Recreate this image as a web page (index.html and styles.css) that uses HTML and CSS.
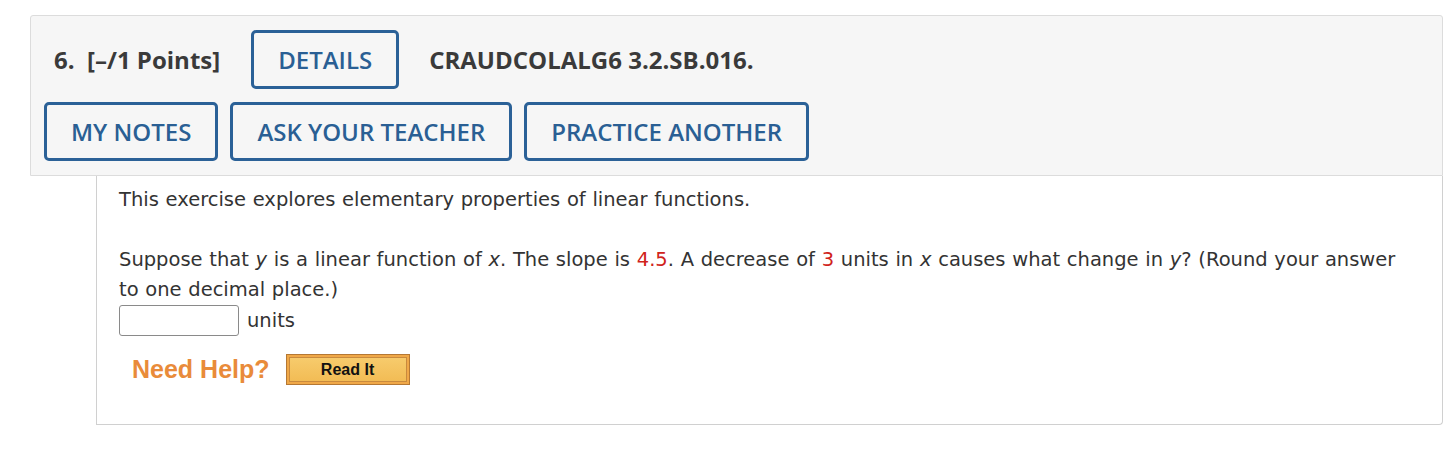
FILE: index.html
```html
<!DOCTYPE html>
<html>
<head>
<meta charset="utf-8">
<link rel="stylesheet" href="styles.css">
</head>
<body>
<div class="page">
  <div class="header">
    <div class="row row-top">
      <span class="qnum">6.&nbsp;&nbsp;[–/1 Points]</span>
      <span class="btn">DETAILS</span>
      <span class="qid">CRAUDCOLALG6 3.2.SB.016.</span>
    </div>
    <div class="row row-bottom">
      <span class="btn">MY NOTES</span>
      <span class="btn">ASK YOUR TEACHER</span>
      <span class="btn">PRACTICE ANOTHER</span>
    </div>
  </div>
  <div class="content">
    <p class="line">This exercise explores elementary properties of linear functions.</p>
    <p class="line blank">&nbsp;</p>
    <p class="line">Suppose that <i>y</i> is a linear function of <i>x</i>. The slope is <span class="red">4.5</span>. A decrease of <span class="red">3</span> units in <i>x</i> causes what change in <i>y</i>? (Round your answer to one decimal place.)</p>
    <div class="answer">
      <input class="field" type="text">
      <span class="unit">units</span>
    </div>
    <div class="help">
      <span class="need">Need Help?</span>
      <span class="readit"><span class="readit-inner">Read It</span></span>
    </div>
  </div>
</div>
</body>
</html>
```

FILE: styles.css
```css
html, body {
  margin: 0;
  padding: 0;
  background: #ffffff;
}

.page {
  padding: 15px 1px 0 30px;
}

.header {
  background: #f6f6f6;
  border: 1px solid #dcdcdc;
  border-radius: 3px 3px 0 0;
  padding: 14px 13px 14px 13px;
  font-family: "Open Sans", sans-serif;
  font-weight: 600;
  font-size: 24px;
  color: #333333;
}

.row {
  display: flex;
  align-items: center;
}

.row-top {
  padding-left: 10px;
  gap: 31px;
}

.row-bottom {
  margin-top: 13px;
  gap: 12px;
}

.qnum, .qid {
  font-weight: 700;
  color: #3a3a3a;
  white-space: pre;
}

.qid {
  margin-left: -1px;
}

.btn {
  box-sizing: border-box;
  height: 59px;
  display: inline-flex;
  align-items: center;
  padding: 0 24px;
  border: 3px solid #2b6197;
  border-radius: 5px;
  color: #2a5f94;
  font-weight: 600;
  background: #f6f6f6;
}

.content {
  margin-left: 66px;
  border: 1px solid #d0d0d0;
  border-top: none;
  border-radius: 0 0 4px 0;
  padding: 9px 40px 39px 22px;
  font-family: "DejaVu Sans", Verdana, sans-serif;
  font-size: 19.5px;
  color: #333333;
  background: #ffffff;
}

.line {
  margin: 0;
  line-height: 30px;
  word-spacing: 0.5px;
}

.line.blank {
  word-spacing: 0;
}

.red {
  color: #d0231b;
}

.answer {
  display: flex;
  align-items: center;
  height: 31px;
}

.field {
  box-sizing: border-box;
  width: 120px;
  height: 31px;
  margin: 0;
  border: 1px solid #8a8a8a;
  border-radius: 3px;
  background: #ffffff;
}

.unit {
  margin-left: 8px;
}

.help {
  display: flex;
  align-items: center;
  margin-top: 18px;
  padding-left: 13px;
}

.need {
  font-family: "Liberation Sans", Arial, sans-serif;
  font-weight: 700;
  font-size: 25px;
  color: #e98b3a;
}

.readit {
  box-sizing: border-box;
  margin-left: 16px;
  width: 124px;
  height: 31px;
  border: 1px solid #b57834;
  background: #f0a848;
  padding: 2px;
  display: inline-flex;
}

.readit-inner {
  flex: 1;
  display: flex;
  align-items: center;
  justify-content: center;
  border: 1px solid #c98a3e;
  background: linear-gradient(#f7cb6c, #f2bc55);
  font-family: "Liberation Sans", Arial, sans-serif;
  font-weight: 700;
  font-size: 16px;
  color: #111111;
}
```
